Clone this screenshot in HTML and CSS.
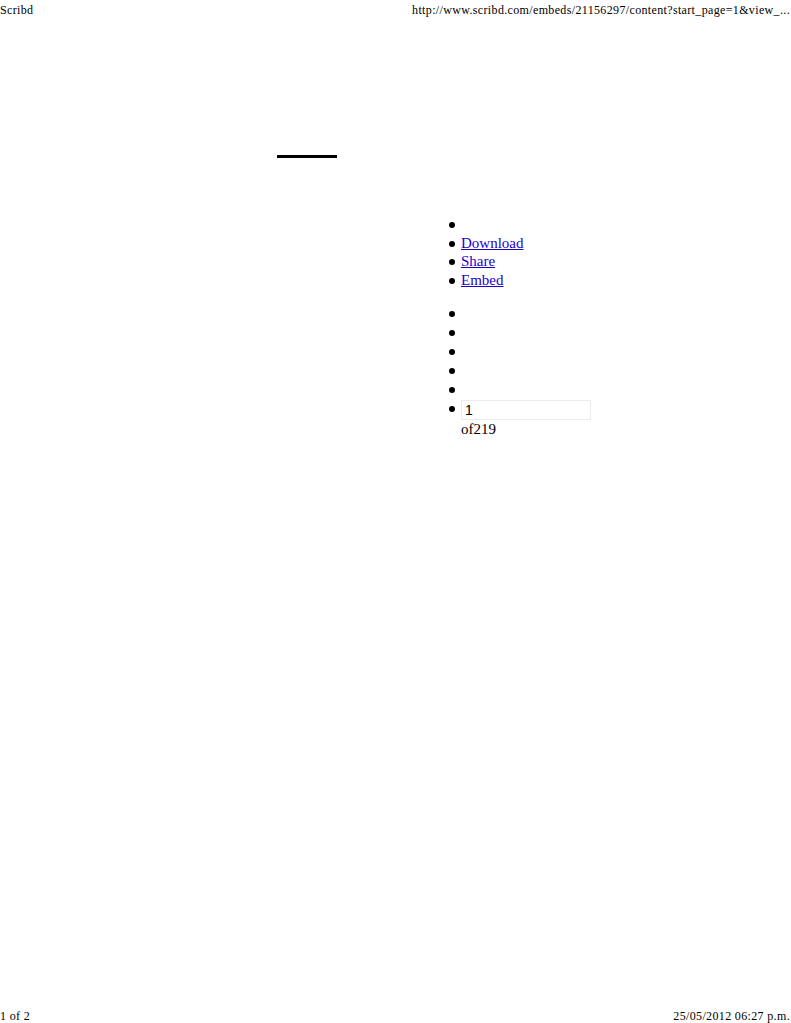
FILE: index.html
```html
<!DOCTYPE html>
<html>
<head>
<meta charset="utf-8">
<title>Scribd</title>
<link rel="stylesheet" href="styles.css">
</head>
<body>
<div class="page">
  <header class="print-head">
    <span>Scribd</span>
    <span>http://www.scribd.com/embeds/21156297/content?start_page=1&amp;view_...</span>
  </header>
  <main class="content">
    <div class="rule-row"><div class="rule"></div></div>
    <div class="toolbar">
      <ul class="menu first">
        <li>&nbsp;</li>
        <li><a href="#">Download</a></li>
        <li><a href="#">Share</a></li>
        <li><a href="#">Embed</a></li>
      </ul>
      <ul class="menu second">
        <li>&nbsp;</li>
        <li>&nbsp;</li>
        <li>&nbsp;</li>
        <li>&nbsp;</li>
        <li>&nbsp;</li>
        <li class="pager"><span class="page-box">1</span><div class="of">of219</div></li>
      </ul>
    </div>
  </main>
  <footer class="print-foot">
    <span>1 of 2</span>
    <span>25/05/2012 06:27 p.m.</span>
  </footer>
</div>
</body>
</html>
```
FILE: styles.css
```css
html, body {
  margin: 0;
  padding: 0;
  background: #fff;
}
.page {
  width: 791px;
  height: 1023px;
  display: flex;
  flex-direction: column;
  font-family: "Liberation Serif", "Times New Roman", serif;
  color: #000;
}
.print-head, .print-foot {
  display: flex;
  justify-content: space-between;
  font-size: 12px;
  letter-spacing: 0.35px;
  line-height: 14px;
  padding: 3px 1px 0 0;
}
.print-foot {
  padding: 0 1px 0 0;
}
.content {
  flex: 1;
}
.rule-row {
  padding: 138px 0 0 277px;
}
.rule {
  width: 60px;
  height: 3px;
  background: #000;
}
.toolbar {
  padding: 57px 0 0 461px;
  font-size: 15px;
}
.menu {
  margin: 0;
  padding: 0;
  list-style: none;
}
.menu li::before {
  content: "";
  display: inline-block;
  width: 6px;
  height: 6px;
  border-radius: 50%;
  background: #000;
  margin-left: -12px;
  margin-right: 6px;
  vertical-align: 1px;
}
.menu.first li {
  line-height: 18.5px;
}
.menu.second {
  margin-top: 15px;
}
.menu.second li {
  line-height: 19px;
}
.menu a {
  color: #2200cc;
}
.page-box {
  display: inline-block;
  vertical-align: middle;
  width: 125px;
  height: 18px;
  border: 1px solid #ececec;
  font-family: "Liberation Sans", Arial, sans-serif;
  font-size: 14px;
  line-height: 18px;
  padding-left: 3px;
}
.of {
  line-height: 19px;
}
```
